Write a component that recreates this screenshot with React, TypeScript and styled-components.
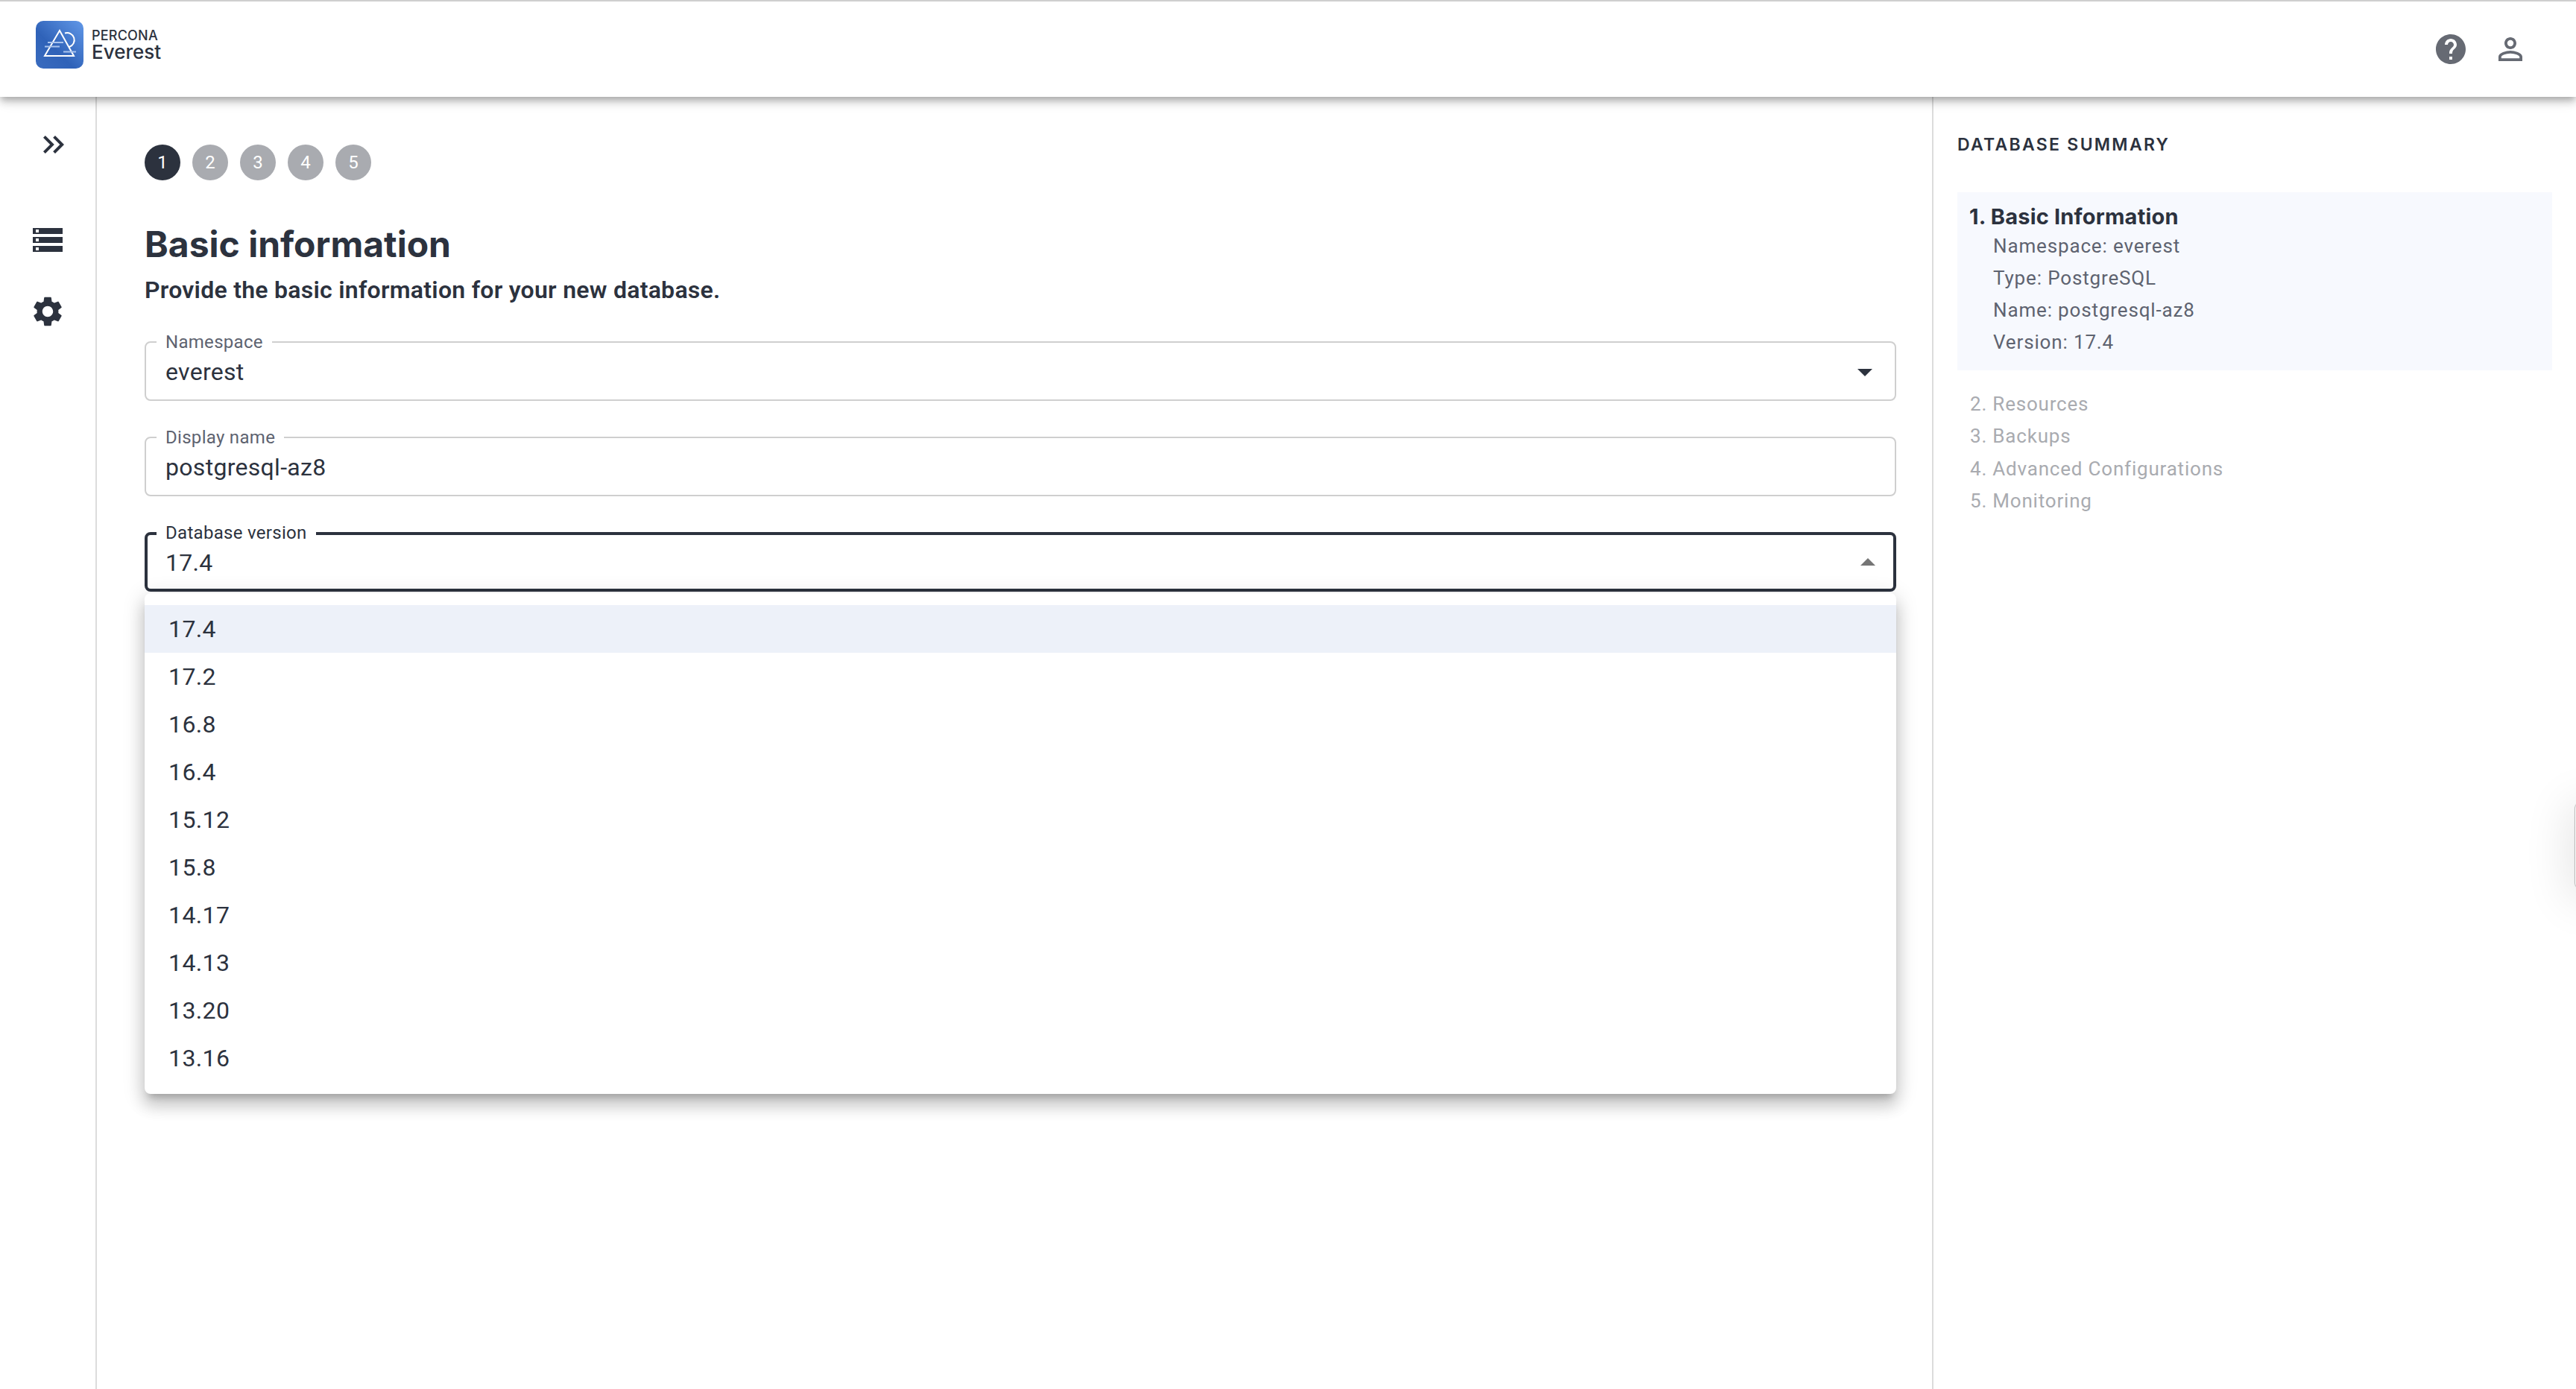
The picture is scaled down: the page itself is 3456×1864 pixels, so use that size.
import React from 'react';
import styled, { createGlobalStyle } from 'styled-components';
import {
  MdHelp,
  MdKeyboardDoubleArrowRight,
  MdOutlinePersonOutline,
  MdSettings,
  MdStorage,
} from 'react-icons/md';

const INK = '#2c323e';
const MUTED = '#5e6370';
const FAINT = '#a9abb0';
const LINE = '#cfcfcf';
const HEADING = '"Inter", "Noto Sans", sans-serif';
const BODY = '"Roboto", "Liberation Sans", sans-serif';

const versions = ['17.4', '17.2', '16.8', '16.4', '15.12', '15.8', '14.17', '14.13', '13.20', '13.16'];
const steps = [1, 2, 3, 4, 5];
const details = ['Namespace: everest', 'Type: PostgreSQL', 'Name: postgresql-az8', 'Version: 17.4'];
const pending = ['2. Resources', '3. Backups', '4. Advanced Configurations', '5. Monitoring'];

const GlobalStyle = createGlobalStyle`
  html, body {
    margin: 0;
    padding: 0;
    height: 100%;
    background: #fff;
    overflow: hidden;
  }
  * {
    box-sizing: border-box;
  }
`;

const Page = styled.div`
  position: relative;
  display: flex;
  flex-direction: column;
  width: 3456px;
  height: 1864px;
  overflow: hidden;
  border-top: 2px solid ${LINE};
  font-family: ${BODY};
  color: ${INK};
`;

const Header = styled.header`
  position: relative;
  z-index: 3;
  flex: none;
  display: flex;
  align-items: center;
  justify-content: space-between;
  height: 128px;
  padding: 0 64px 0 48px;
  background: #fff;
  box-shadow: 0 4px 8px -2px rgba(0, 0, 0, 0.2), 0 8px 10px 0 rgba(0, 0, 0, 0.14), 0 2px 20px 0 rgba(0, 0, 0, 0.12);
`;

const Brand = styled.div`
  display: flex;
  align-items: center;
  gap: 11px;
  margin-bottom: 12px;
`;

const BrandText = styled.div`
  display: flex;
  flex-direction: column;
  font-family: ${HEADING};
  font-weight: 500;
`;

const BrandTop = styled.span`
  font-size: 18px;
  line-height: 19px;
  letter-spacing: 0.2px;
`;

const BrandName = styled.span`
  font-size: 26px;
  line-height: 25px;
`;

const HeaderActions = styled.div`
  display: flex;
  gap: 32px;
  color: #666a73;
  font-size: 48px;
`;

const Body = styled.div`
  flex: 1;
  display: flex;
  min-height: 0;
`;

const Sidebar = styled.nav`
  flex: none;
  display: flex;
  flex-direction: column;
  width: 130px;
  padding: 40px 0 0 40px;
  border-right: 2px solid #dcdcdc;
  font-size: 48px;
  color: ${INK};
`;

const CollapseIcon = styled(MdKeyboardDoubleArrowRight)`
  margin: 0 0 80px 8px;
`;

const NavIcon = styled.div`
  display: flex;
  height: 48px;
  margin-bottom: 48px;
`;

const Main = styled.main`
  position: relative;
  flex: none;
  width: 2462px;
  padding: 64px 48px 0 64px;
`;

const Stepper = styled.ol`
  display: flex;
  gap: 16px;
  margin: 0 0 52px;
  padding: 0;
  list-style: none;
`;

const Step = styled.li<{ $active?: boolean }>`
  display: flex;
  align-items: center;
  justify-content: center;
  width: 48px;
  height: 48px;
  border-radius: 50%;
  background: ${({ $active }) => ($active ? INK : FAINT)};
  color: #fff;
  font-size: 24px;
`;

const Title = styled.h1`
  margin: 0 0 7px;
  font-family: ${HEADING};
  font-size: 48px;
  font-weight: 700;
  line-height: 68px;
`;

const Subtitle = styled.p`
  margin: 0 0 49px;
  font-size: 32px;
  font-weight: 600;
  line-height: 40px;
  letter-spacing: 0.27px;
`;

const Form = styled.div`
  position: relative;
  display: flex;
  flex-direction: column;
  gap: 48px;
`;

const Field = styled.div<{ $focused?: boolean }>`
  position: relative;
  display: flex;
  align-items: center;
  justify-content: space-between;
  height: 80px;
  padding: 2px ${({ $focused }) => ($focused ? '10px' : '16px')} 0 ${({ $focused }) => ($focused ? '24px' : '26px')};
  border: ${({ $focused }) => ($focused ? `4px solid ${INK}` : `2px solid ${LINE}`)};
  border-radius: 8px;
  font-size: 32px;
  letter-spacing: 0.3px;
`;

const FieldLabel = styled.label<{ $focused?: boolean }>`
  position: absolute;
  top: ${({ $focused }) => ($focused ? '-17px' : '-15px')};
  left: ${({ $focused }) => ($focused ? '12px' : '14px')};
  padding: 0 12px;
  background: #fff;
  color: ${({ $focused }) => ($focused ? INK : MUTED)};
  font-size: 24px;
  line-height: 28px;
  letter-spacing: 0.3px;
`;

const Caret = styled.svg<{ $muted?: boolean }>`
  flex: none;
  width: 48px;
  height: 48px;
  fill: ${({ $muted }) => ($muted ? '#757575' : INK)};
`;

const Menu = styled.ul`
  position: absolute;
  top: 338px;
  left: 0;
  right: 0;
  margin: 0;
  padding: 16px 0;
  list-style: none;
  background: #fff;
  border-radius: 8px;
  box-shadow: 0 10px 10px -6px rgba(0, 0, 0, 0.2), 0 16px 20px 2px rgba(0, 0, 0, 0.14), 0 6px 28px 4px rgba(0, 0, 0, 0.12);
`;

const MenuItem = styled.li<{ $selected?: boolean }>`
  display: flex;
  align-items: center;
  height: 64px;
  padding: 0 32px;
  background: ${({ $selected }) => ($selected ? '#edf1f9' : 'transparent')};
  font-size: 32px;
  letter-spacing: 0.4px;
`;

const Summary = styled.aside`
  flex: 1;
  padding: 46px 32px 0 32px;
  border-left: 2px solid #dcdcdc;
`;

const SummaryTitle = styled.h2`
  margin: 0 0 46px;
  font-family: ${HEADING};
  font-size: 23px;
  font-weight: 600;
  line-height: 36px;
  letter-spacing: 2.3px;
  text-transform: uppercase;
`;

const SummaryBlock = styled.section`
  height: 239px;
  padding: 15px 16px;
  background: #f7f9fe;
`;

const BlockTitle = styled.h3`
  margin: 0;
  font-family: ${HEADING};
  font-size: 29px;
  font-weight: 700;
  line-height: 36px;
  letter-spacing: 0.2px;
`;

const DetailLine = styled.div`
  height: 43px;
  padding-left: 32px;
  color: ${MUTED};
  font-size: 26px;
  line-height: 43px;
  letter-spacing: 0.85px;
`;

const PendingList = styled.div`
  padding: 24px 0 0 17px;
`;

const PendingItem = styled.div`
  height: 43.3px;
  color: ${FAINT};
  font-size: 26px;
  line-height: 43px;
  letter-spacing: 0.8px;
`;

const EdgeWidget = styled.div`
  position: absolute;
  top: 1075px;
  left: 3455px;
  width: 40px;
  height: 116px;
  border-radius: 8px;
  background: #fff;
  box-shadow: 0 8px 60px 10px rgba(0, 0, 0, 0.1), -1px 0 1px rgba(0, 0, 0, 0.25);
`;

function Logo() {
  return (
    <svg width="64" height="64" viewBox="0 0 64 64" aria-hidden="true">
      <defs>
        <linearGradient id="logoFill" x1="1" y1="0" x2="0" y2="1">
          <stop offset="0" stopColor="#6198e8" />
          <stop offset="0.6" stopColor="#2f62b8" />
          <stop offset="1" stopColor="#3a6cbf" />
        </linearGradient>
      </defs>
      <rect width="64" height="64" rx="10" fill="url(#logoFill)" />
      <path d="M32 13 L51 47 H12 Z" fill="none" stroke="#fff" strokeWidth="2" />
      <path d="M39 16.5 A9.5 9.5 0 0 1 45 35" fill="none" stroke="#fff" strokeWidth="2" />
      <path d="M16 29 H37 M12 34.5 H32 M37 41.5 H54" stroke="#a9c4ee" strokeWidth="2" />
    </svg>
  );
}

export default function App() {
  return (
    <Page>
      <GlobalStyle />
      <Header>
        <Brand>
          <Logo />
          <BrandText>
            <BrandTop>PERCONA</BrandTop>
            <BrandName>Everest</BrandName>
          </BrandText>
        </Brand>
        <HeaderActions>
          <MdHelp />
          <MdOutlinePersonOutline />
        </HeaderActions>
      </Header>
      <Body>
        <Sidebar>
          <CollapseIcon />
          <NavIcon>
            <MdStorage />
          </NavIcon>
          <NavIcon>
            <MdSettings />
          </NavIcon>
        </Sidebar>
        <Main>
          <Stepper>
            {steps.map((step) => (
              <Step key={step} $active={step === 1}>
                {step}
              </Step>
            ))}
          </Stepper>
          <Title>Basic information</Title>
          <Subtitle>Provide the basic information for your new database.</Subtitle>
          <Form>
            <Field>
              <FieldLabel>Namespace</FieldLabel>
              everest
              <Caret viewBox="0 0 24 24">
                <path d="M7 10l5 5 5-5z" />
              </Caret>
            </Field>
            <Field>
              <FieldLabel>Display name</FieldLabel>
              postgresql-az8
            </Field>
            <Field $focused>
              <FieldLabel $focused>Database version</FieldLabel>
              17.4
              <Caret viewBox="0 0 24 24" $muted>
                <path d="M7 14l5-5 5 5z" />
              </Caret>
            </Field>
            <Menu>
              {versions.map((version, i) => (
                <MenuItem key={version} $selected={i === 0}>
                  {version}
                </MenuItem>
              ))}
            </Menu>
          </Form>
        </Main>
        <Summary>
          <SummaryTitle>Database Summary</SummaryTitle>
          <SummaryBlock>
            <BlockTitle>1. Basic Information</BlockTitle>
            {details.map((line) => (
              <DetailLine key={line}>{line}</DetailLine>
            ))}
          </SummaryBlock>
          <PendingList>
            {pending.map((line) => (
              <PendingItem key={line}>{line}</PendingItem>
            ))}
          </PendingList>
        </Summary>
      </Body>
      <EdgeWidget />
    </Page>
  );
}
